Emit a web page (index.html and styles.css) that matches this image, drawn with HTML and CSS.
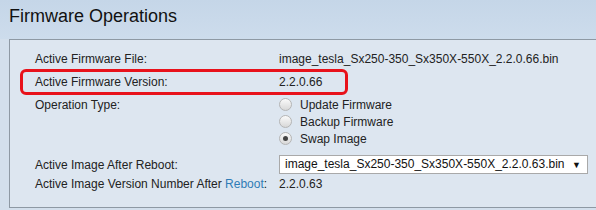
FILE: index.html
```html
<!DOCTYPE html>
<html lang="en">
<head>
    <link rel="stylesheet" href="styles.css">
</head>
<body>
    <div class="page-head">
        <h1>Firmware Operations</h1>
    </div>
    <div class="wrap">
        <div class="panel">
            <div class="row">
                <div class="label">Active Firmware File:</div>
                <div class="value">image_tesla_Sx250-350_Sx350X-550X_2.2.0.66.bin</div>
            </div>
            <div class="row highlight">
                <div class="label">Active Firmware Version:</div>
                <div class="value">2.2.0.66</div>
            </div>
            <div class="row">
                <div class="label">Operation Type:</div>
                <div class="value radios">
                    <label><span class="radio"></span>Update Firmware</label>
                    <label><span class="radio"></span>Backup Firmware</label>
                    <label><span class="radio checked"></span>Swap Image</label>
                </div>
            </div>
            <div class="row select-row">
                <div class="label">Active Image After Reboot:</div>
                <div class="value">
                    <div class="select">image_tesla_Sx250-350_Sx350X-550X_2.2.0.63.bin <span class="arrow">&#9660;</span></div>
                </div>
            </div>
            <div class="row last-row">
                <div class="label">Active Image Version Number After <a href="#">Reboot</a>:</div>
                <div class="value">2.2.0.63</div>
            </div>
        </div>
    </div>
</body>
</html>
```

FILE: styles.css
```css
body {
    margin: 0;
    width: 596px;
    height: 210px;
    overflow: hidden;
    font-family: "Liberation Sans", Arial, sans-serif;
    font-size: 12px;
    color: #222;
    background: #d3dfec;
}
.page-head {
    height: 39px;
    background: linear-gradient(#c5d6e8, #cddcec);
    padding-left: 9px;
}
.page-head h1 {
    margin: 0;
    padding-top: 6px;
    font-size: 18px;
    font-weight: normal;
    color: #111;
}
.wrap {
    padding-left: 9px;
}
.panel {
    background: #dde6f0;
    border: 1px solid #8e99a4;
    border-right: none;
    height: 159px;
    padding: 8px 0 0 25px;
}
.row {
    display: flex;
    line-height: 14px;
    padding: 4px 0 5px;
}
.label {
    width: 244px;
    white-space: nowrap;
}
.label a {
    color: #2f7cb6;
    text-decoration: none;
}
.value {
    flex: 1;
    white-space: nowrap;
}
.highlight {
    position: relative;
}
.highlight::before {
    content: "";
    position: absolute;
    left: -15px;
    top: -2px;
    width: 322px;
    height: 20px;
    border: 3px solid #e8121b;
    border-radius: 6px;
}
.radios {
    margin-top: -2px;
}
.radios label {
    display: flex;
    align-items: center;
    height: 17px;
}
.radio {
    width: 11px;
    height: 11px;
    border-radius: 50%;
    border: 1px solid #b5b5b5;
    background: linear-gradient(#fafafa, #d8d8d8);
    margin-right: 8px;
    position: relative;
}
.radio.checked::after {
    content: "";
    position: absolute;
    left: 3px;
    top: 3px;
    width: 5px;
    height: 5px;
    border-radius: 50%;
    background: #444;
}
.select-row {
    align-items: center;
    padding: 3px 0 0;
}
.select {
    display: inline-block;
    background: #fff;
    border: 1px solid #a9a9a9;
    padding: 1px 6px 1px 5px;
    line-height: 14px;
    color: #111;
}
.arrow {
    font-size: 9px;
    margin-left: 4px;
}
.last-row {
    padding-top: 3px;
}
```
